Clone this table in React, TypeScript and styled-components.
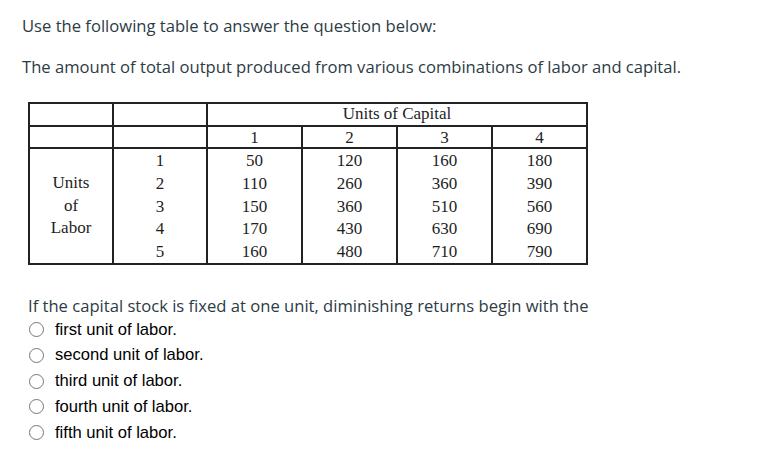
import { createGlobalStyle, styled } from "styled-components";

const GlobalStyle = createGlobalStyle`
  body {
    margin: 0;
    background: #ffffff;
  }
`;

const capitalCols = ["1", "2", "3", "4"];

const rows = [
  ["1", "50", "120", "160", "180"],
  ["2", "110", "260", "360", "390"],
  ["3", "150", "360", "510", "560"],
  ["4", "170", "430", "630", "690"],
  ["5", "160", "480", "710", "790"],
];

const answers = [
  "first unit of labor.",
  "second unit of labor.",
  "third unit of labor.",
  "fourth unit of labor.",
  "fifth unit of labor.",
];

export default function App() {
  return (
    <Page>
      <GlobalStyle />
      <Intro>Use the following table to answer the question below:</Intro>
      <Intro>
        The amount of total output produced from various combinations of labor
        and capital.
      </Intro>

      <OutputTable>
        <colgroup>
          <col style={{ width: 84 }} />
          <col style={{ width: 94 }} />
          <col style={{ width: 95 }} />
          <col style={{ width: 95 }} />
          <col style={{ width: 95 }} />
          <col style={{ width: 95 }} />
        </colgroup>
        <tbody>
          <tr>
            <HeadCell $tall />
            <HeadCell $tall />
            <HeadCell $tall colSpan={4}>
              Units of Capital
            </HeadCell>
          </tr>
          <tr>
            <HeadCell />
            <HeadCell />
            {capitalCols.map((c) => (
              <HeadCell key={c}>{c}</HeadCell>
            ))}
          </tr>
          {rows.map((r, i) => (
            <tr key={r[0]}>
              {i === 0 && (
                <LaborCell rowSpan={5}>
                  Units
                  <br />
                  of
                  <br />
                  Labor
                </LaborCell>
              )}
              {r.map((v, j) => (
                <DataCell key={j}>{v}</DataCell>
              ))}
            </tr>
          ))}
        </tbody>
      </OutputTable>

      <Question>
        If the capital stock is fixed at one unit, diminishing returns begin
        with the
      </Question>
      <AnswerList>
        {answers.map((a) => (
          <Answer key={a}>
            <Radio type="radio" name="answer" />
            <span>{a}</span>
          </Answer>
        ))}
      </AnswerList>
    </Page>
  );
}

const Page = styled.div`
  padding: 15px 0 0 22px;
  font-family: "Open Sans", "Liberation Sans", sans-serif;
  color: #2d3b45;
`;

const Intro = styled.p`
  margin: 0 0 19px;
  font-size: 16.6px;
  line-height: 22px;
`;

const OutputTable = styled.table`
  margin: 24px 0 0 6px;
  border-collapse: collapse;
  table-layout: fixed;
  width: 558px;
  border: 2px solid #222;
  font-family: "Liberation Serif", "Times New Roman", serif;
  font-size: 17px;
  color: #1e1e1e;
`;

const HeadCell = styled.td<{ $tall?: boolean }>`
  border: 2px solid #222;
  height: ${(p) => (p.$tall ? 21 : 20)}px;
  padding: 0;
  text-align: center;
  line-height: 19px;
  vertical-align: ${(p) => (p.$tall ? "top" : "middle")};
`;

const LaborCell = styled.td`
  border: 2px solid #222;
  padding: 0;
  text-align: center;
  line-height: 22.5px;
`;

const DataCell = styled.td`
  border-left: 2px solid #222;
  border-right: 2px solid #222;
  padding: 1px 0 0;
  height: 21.75px;
  line-height: 21.75px;
  text-align: center;
`;

const Question = styled.p`
  margin: 30px 0 0 6px;
  font-size: 16.6px;
  line-height: 22px;
`;

const AnswerList = styled.div`
  display: flex;
  flex-direction: column;
  gap: 3.7px;
  margin: 2px 0 0 7px;
`;

const Answer = styled.label`
  display: flex;
  align-items: center;
  height: 22px;
  font-family: "Liberation Sans", Arial, sans-serif;
  font-size: 16.6px;
  color: #000;
`;

const Radio = styled.input`
  appearance: none;
  width: 15px;
  height: 15px;
  margin: 0 11px 0 0;
  border: 1.5px solid #767676;
  border-radius: 50%;
  background: #fff;
  box-sizing: border-box;
`;
